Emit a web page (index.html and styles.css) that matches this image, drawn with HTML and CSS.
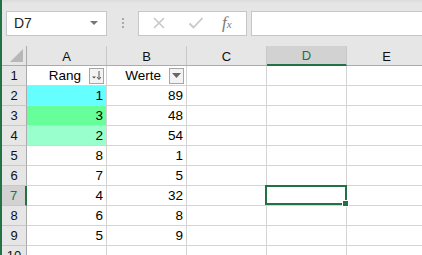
FILE: index.html
```html
<!DOCTYPE html>
<html lang="de">
<head>
    <meta charset="UTF-8">
    <title>Rang</title>
    <link rel="stylesheet" href="styles.css">
</head>
<body>
    <div class="app">
        <div class="formula-bar">
            <div class="name-box">
                <span>D7</span>
                <span class="caret"></span>
            </div>
            <div class="grip"><i></i><i></i><i></i></div>
            <div class="fx-buttons">
                <svg class="btn-x" width="14" height="14" viewBox="0 0 14 14"><path d="M2 2L12 12M12 2L2 12" stroke="#c8c8c8" stroke-width="1.6" fill="none"/></svg>
                <svg class="btn-ok" width="16" height="14" viewBox="0 0 16 14"><path d="M1.5 7.5L5.5 11.5L14.5 2" stroke="#c8c8c8" stroke-width="1.8" fill="none"/></svg>
                <span class="fx">f<sub>x</sub></span>
            </div>
            <div class="formula-input"></div>
        </div>

        <div class="sheet" id="sheet">
            <div class="corner"><span class="tri"></span></div>
            <div class="col-head">A</div>
            <div class="col-head">B</div>
            <div class="col-head">C</div>
            <div class="col-head active">D</div>
            <div class="col-head">E</div>
        </div>
    </div>

    <script>
        const data = [
            ['Rang', 'Werte'],
            [1, 89], [3, 48], [2, 54], [8, 1], [7, 5], [4, 32], [6, 8], [5, 9], ['', '']
        ];
        const fills = { 2: 'fill-cyan', 3: 'fill-green', 4: 'fill-mint' };
        const sheet = document.getElementById('sheet');

        data.forEach(function (row, i) {
            const r = i + 1;
            let html = '<div class="row-head' + (r === 7 ? ' active' : '') + '">' + r + '</div>';
            if (r === 1) {
                html += '<div class="cell head">Rang<span class="filter sort"><svg width="11" height="11" viewBox="0 0 11 11"><path d="M1 6.5h4l-2 2z" fill="#555"/><path d="M8 1v8M6 7l2 2.5 2-2.5" stroke="#555" stroke-width="1" fill="none"/></svg></span></div>';
                html += '<div class="cell head">Werte<span class="filter"><svg width="9" height="5" viewBox="0 0 9 5"><path d="M0 0h9L4.5 5z" fill="#666"/></svg></span></div>';
            } else {
                html += '<div class="cell ' + (fills[r] || '') + '">' + row[0] + '</div>';
                html += '<div class="cell">' + row[1] + '</div>';
            }
            html += '<div class="cell"></div>';
            html += '<div class="cell' + (r === 7 ? ' selected' : '') + '"></div>';
            html += '<div class="cell"></div>';
            sheet.insertAdjacentHTML('beforeend', html);
        });
    </script>
</body>
</html>
```

FILE: styles.css
```css
body {
    margin: 0;
    font-family: "Liberation Sans", Arial, sans-serif;
    overflow: hidden;
}
.app {
    border-left: 2px solid #217346;
    background: #e6e6e6;
    height: 255px;
    overflow: hidden;
}
.formula-bar {
    display: flex;
    align-items: center;
    height: 46px;
    padding-left: 4px;
    background: linear-gradient(#dcdcdc, #e6e6e6 4px);
    box-sizing: border-box;
}
.name-box {
    width: 101px;
    height: 25px;
    box-sizing: border-box;
    border: 1px solid #c6c6c6;
    background: #fff;
    display: flex;
    align-items: center;
    justify-content: space-between;
    padding: 0 8px 0 7px;
    font-size: 14px;
    color: #222;
}
.caret {
    width: 0;
    height: 0;
    border-left: 4px solid transparent;
    border-right: 4px solid transparent;
    border-top: 4px solid #777;
}
.grip {
    width: 31px;
    display: flex;
    flex-direction: column;
    align-items: center;
    gap: 2px;
}
.grip i {
    width: 2px;
    height: 2px;
    background: #a8a8a8;
}
.fx-buttons {
    width: 109px;
    height: 25px;
    box-sizing: border-box;
    border: 1px solid #c6c6c6;
    background: #fff;
    display: flex;
    align-items: center;
    padding-left: 13px;
}
.btn-ok {
    margin-left: 22px;
}
.fx {
    margin-left: 18px;
    font-family: "Liberation Serif", serif;
    font-style: italic;
    font-size: 17px;
    color: #7a7a7a;
}
.fx sub {
    font-size: 11px;
    vertical-align: 0;
}
.formula-input {
    flex: 1;
    margin-left: 4px;
    height: 25px;
    box-sizing: border-box;
    border: 1px solid #c6c6c6;
    border-right: none;
    background: #fff;
}
.sheet {
    display: grid;
    grid-template-columns: 25px repeat(5, 80px);
    grid-auto-rows: 20px;
    grid-template-rows: 20px;
    background: #fff;
}
.corner, .col-head, .row-head {
    background: #e6e6e6;
    color: #111;
    font-size: 13px;
    display: flex;
    align-items: center;
    justify-content: center;
    box-sizing: border-box;
}
.corner {
    border-right: 1px solid #ababab;
    border-bottom: 1px solid #ababab;
    position: relative;
}
.tri {
    position: absolute;
    right: 3px;
    bottom: 3px;
    width: 0;
    height: 0;
    border-left: 13px solid transparent;
    border-bottom: 13px solid #b7b7b7;
}
.col-head {
    border-right: 1px solid #c8c8c8;
    border-bottom: 1px solid #ababab;
    padding-top: 1px;
}
.col-head.active {
    background: #d2d2d2;
    color: #217346;
    border-bottom: 2px solid #217346;
}
.row-head {
    border-right: 1px solid #ababab;
    border-bottom: 1px solid #c8c8c8;
}
.row-head.active {
    background: #d2d2d2;
    color: #217346;
    border-right: 2px solid #217346;
}
.cell {
    border-right: 1px solid #d4d4d4;
    border-bottom: 1px solid #d4d4d4;
    box-sizing: border-box;
    font-size: 13.5px;
    color: #000;
    text-align: right;
    padding: 2px 3px 0 0;
}
.cell.head {
    display: flex;
    align-items: center;
    justify-content: flex-end;
    padding: 0 2px 0 0;
}
.filter {
    width: 15px;
    height: 16px;
    box-sizing: border-box;
    margin-left: 8px;
    border: 1px solid #a6a6a6;
    background: #f3f3f3;
    display: flex;
    align-items: center;
    justify-content: center;
}
.fill-cyan { background: #66ffff; }
.fill-green { background: #66ff99; }
.fill-mint { background: #99ffcc; }
.cell.selected {
    position: relative;
}
.cell.selected::before {
    content: "";
    position: absolute;
    left: -2px;
    top: -1px;
    right: -1px;
    bottom: 0;
    border: 2px solid #217346;
}
.cell.selected::after {
    content: "";
    position: absolute;
    right: -3px;
    bottom: -2px;
    width: 5px;
    height: 5px;
    background: #217346;
    border: 1px solid #fff;
}
```
